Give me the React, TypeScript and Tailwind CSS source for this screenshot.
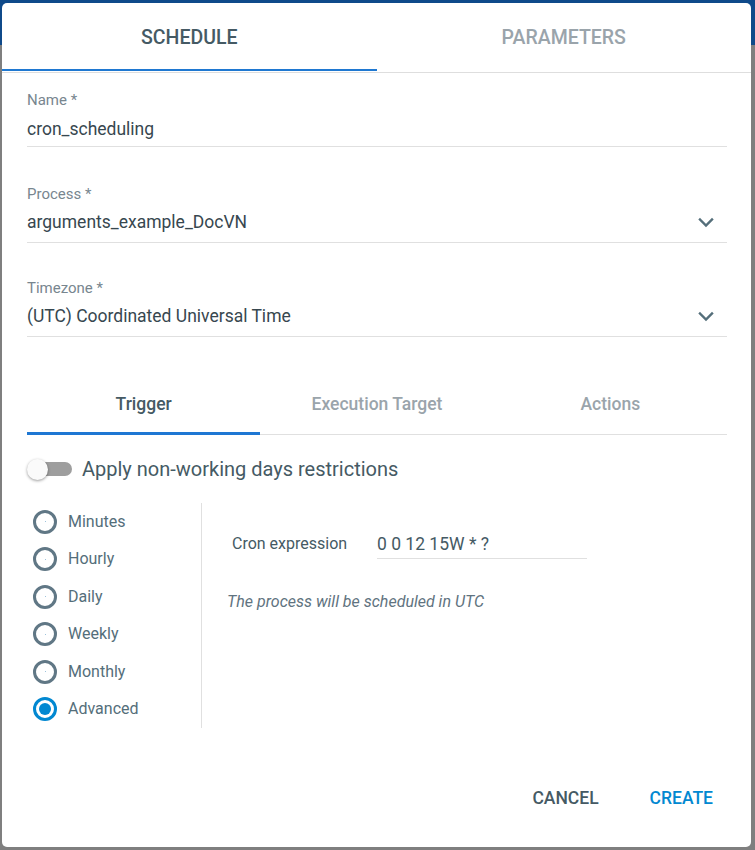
import React, { useState } from 'react';

const fieldLabel = 'text-[15px] leading-[18px] text-[#78868f]';
const fieldValue = 'text-[17.5px] leading-6 text-[#37474f]';

function Chevron() {
  return (
    <svg width="18" height="18" viewBox="0 0 18 18" className="shrink-0">
      <path d="M3 6.5l6 6 6-6" fill="none" stroke="#546e7a" strokeWidth="2.4" strokeLinecap="square" />
    </svg>
  );
}

function Field({ label, value, select, className = '' }: { label: string; value: string; select?: boolean; className?: string }) {
  return (
    <div className={'flex flex-col ' + className}>
      <div className={fieldLabel}>{label}</div>
      <div
        className={
          'flex items-center justify-between border-b border-[#e0e0e0] ' +
          (select ? 'mt-[7px] pb-[8px]' : 'mt-[8px] pb-[5px]')
        }
      >
        <span className={fieldValue}>{value}</span>
        {select && <span className="mr-[12px]"><Chevron /></span>}
      </div>
    </div>
  );
}

function Radio({ label, checked }: { label: string; checked?: boolean }) {
  return (
    <div className="h-[37.5px] flex items-center">
      <span
        className={
          'ml-[6px] w-[24px] h-[24px] rounded-full border-[3px] flex items-center justify-center ' +
          (checked ? 'border-[#0288d1]' : 'border-[#607785]')
        }
      >
        {checked ? (
          <span className="w-[12px] h-[12px] rounded-full bg-[#0288d1]" />
        ) : (
          <span className="w-[1px] h-[1px] bg-[#9fc3db]" />
        )}
      </span>
      <span className="ml-[11px] text-[16px] text-[#546e7a]">{label}</span>
    </div>
  );
}

export default function App() {
  const [tab] = useState('schedule');
  const subTabs = ['Trigger', 'Execution Target', 'Actions'];
  const radios = ['Minutes', 'Hourly', 'Daily', 'Weekly', 'Monthly', 'Advanced'];

  return (
    <div
      className="w-[755px] h-[850px] pl-[2px] pt-[3px] bg-[linear-gradient(to_bottom,#0f4a8a_45px,#7f7f7f_45px)]"
      style={{ fontFamily: 'Roboto, "Noto Sans", sans-serif' }}
    >
      <div className="w-[749px] h-[844px] bg-white rounded-[5px] flex flex-col">
        {/* Header tabs */}
        <div className="flex border-b border-[#dedede] pb-[1px]">
          {['SCHEDULE', 'PARAMETERS'].map((t) => {
            const active = t.toLowerCase() === tab;
            return (
              <div
                key={t}
                className={
                  'flex-1 h-[68px] pt-[4px] flex items-center justify-center text-[19.5px] font-medium border-b-[2px] ' +
                  (active ? 'text-[#455a64] border-[#1f78d1]' : 'text-[#9aa4ab] border-transparent')
                }
              >
                {t}
              </div>
            );
          })}
        </div>

        <div className="pl-[25px] pr-[24px] pt-[18px] flex flex-col">
          <Field label="Name *" value="cron_scheduling" />
          <Field className="mt-[38px]" label="Process *" value="arguments_example_DocVN" select />
          <Field className="mt-[36px]" label="Timezone *" value="(UTC) Coordinated Universal Time" select />

          {/* Sub tabs */}
          <div className="mt-[41px] flex border-b border-[#e0e0e0]">
            {subTabs.map((t, i) => (
              <div
                key={t}
                className={
                  'flex-1 h-[57px] pb-[2px] -mb-px flex items-center justify-center text-[17.5px] font-medium border-b-[3px] ' +
                  (i === 0 ? 'text-[#455a64] border-[#1e77d3]' : 'text-[#9aa4ab] border-transparent')
                }
              >
                {t}
              </div>
            ))}
          </div>

          {/* Toggle */}
          <div className="mt-[22px] h-[24px] flex items-center">
            <div className="relative w-[45px] h-[22px] flex items-center">
              <span className="ml-[10px] w-[35px] h-[14px] rounded-full bg-[#9e9e9e]" />
              <span className="absolute left-0 top-[1px] w-[21px] h-[21px] rounded-full bg-[#fafafa] shadow-[0_1px_3px_rgba(0,0,0,0.4)]" />
            </div>
            <span className="ml-[10px] text-[20px] text-[#455a64]">Apply non-working days restrictions</span>
          </div>

          {/* Trigger body */}
          <div className="mt-[22px] flex">
            <div className="w-[174px] flex flex-col">
              {radios.map((r) => (
                <Radio key={r} label={r} checked={r === 'Advanced'} />
              ))}
            </div>
            <div className="flex-1 border-l border-[#e0e0e0] pl-[25px] pt-[26px] flex flex-col">
              <div className="flex items-start">
                <span className="ml-[5px] w-[145px] text-[16px] leading-[30px] text-[#455a64]">Cron expression</span>
                <span className="w-[210px] pt-[3px] pb-[2px] border-b border-[#e0e0e0] text-[17.5px] leading-6 text-[#455a64]">
                  0 0 12 15W * ?
                </span>
              </div>
              <div className="mt-[31px] text-[16px] italic text-[#5f7380]">
                The process will be scheduled in UTC
              </div>
            </div>
          </div>
        </div>

        {/* Footer */}
        <div className="mt-auto pb-[31px] pr-[22px] flex justify-end gap-[19px]">
          <button className="h-[36px] px-4 text-[17.5px] font-medium text-[#455a64]">CANCEL</button>
          <button className="h-[36px] px-4 text-[17.5px] font-medium text-[#0288d1]">CREATE</button>
        </div>
      </div>
    </div>
  );
}
